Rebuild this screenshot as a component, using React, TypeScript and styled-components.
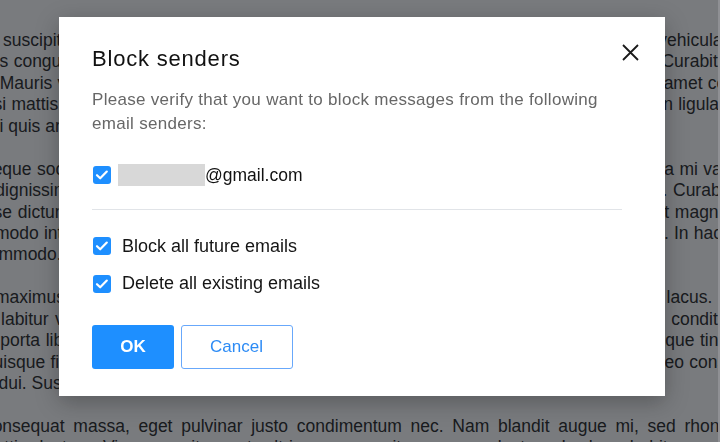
import React from "react";
import styled, { createGlobalStyle } from "styled-components";

const GlobalStyle = createGlobalStyle`
  html, body {
    margin: 0;
    padding: 0;
    overflow: hidden;
    background: #fff;
  }
  body {
    font-family: "Liberation Sans", Arial, sans-serif;
  }
`;

const LINE = 21.44;

const Page = styled.div`
  width: 720px;
  height: 442px;
  overflow: hidden;
  padding-top: 30px;
  box-sizing: border-box;
`;

const Article = styled.div`
  width: 790px;
  margin-left: -20px;
  color: #222;
  font-size: 17.5px;
  line-height: ${LINE}px;
`;

const Paragraph = styled.div`
  & + & {
    margin-top: ${LINE}px;
  }
`;

const Line = styled.div<{ $last?: boolean }>`
  height: ${LINE}px;
  overflow: hidden;
  text-align: justify;
  text-align-last: ${(p) => (p.$last ? "left" : "justify")};
`;

const Backdrop = styled.div`
  position: fixed;
  inset: 0;
  background: rgba(20, 22, 28, 0.57);
  padding: 17px 0 0 59px;
  box-sizing: border-box;
`;

const ScrollEdge = styled.div`
  position: fixed;
  top: 0;
  right: 0;
  width: 2px;
  height: 100%;
  background: #8f9094;
`;

const Dialog = styled.div`
  position: relative;
  width: 606px;
  box-sizing: border-box;
  background: #fff;
  padding: 28px 43px 27px 33px;
  box-shadow: 0 6px 22px rgba(0, 0, 0, 0.28);
  font-family: "Liberation Sans", Arial, sans-serif;
`;

const Title = styled.h2`
  margin: 0;
  font-size: 22px;
  line-height: 28px;
  font-weight: 400;
  letter-spacing: 0.8px;
  color: #111;
`;

const CloseButton = styled.button`
  position: absolute;
  top: 27px;
  right: 26px;
  width: 17px;
  height: 17px;
  padding: 0;
  border: none;
  background: none;
  cursor: pointer;
  display: flex;
`;

const Description = styled.p`
  margin: 15px 0 0;
  font-size: 17px;
  line-height: 24px;
  letter-spacing: 0.3px;
  color: #676767;
`;

const EmailRow = styled.div`
  margin-top: 28px;
  height: 22px;
  display: flex;
  align-items: center;
`;

const EmailMask = styled.span`
  width: 87px;
  height: 22px;
  margin-left: 7px;
  background: #d8d8d8;
`;

const EmailDomain = styled.span`
  font-size: 17.5px;
  color: #111;
`;

const Divider = styled.hr`
  margin: 23px 0 0;
  border: none;
  height: 1px;
  background: #e1e4e8;
`;

const Options = styled.div`
  margin-top: 24px;
  display: flex;
  flex-direction: column;
  gap: 13.5px;
`;

const OptionRow = styled.label`
  height: 24px;
  display: flex;
  align-items: center;
  gap: 11px;
  font-size: 18px;
  color: #151515;
`;

const Box = styled.span`
  width: 18px;
  height: 18px;
  margin-left: 1px;
  border-radius: 3px;
  background: #1e8fff;
  display: flex;
  flex-shrink: 0;
`;

const Actions = styled.div`
  margin-top: 29px;
  display: flex;
  gap: 6.5px;
`;

const Button = styled.button<{ $primary?: boolean }>`
  height: 44px;
  width: ${(p) => (p.$primary ? "82px" : "112px")};
  border-radius: 3px;
  font-family: inherit;
  font-size: 17px;
  cursor: pointer;
  box-sizing: border-box;
  border: ${(p) => (p.$primary ? "none" : "1.5px solid #68a8fb")};
  background: ${(p) => (p.$primary ? "#1e8fff" : "#fff")};
  color: ${(p) => (p.$primary ? "#fff" : "#2c8bf5")};
  font-weight: ${(p) => (p.$primary ? 700 : 400)};
`;

const CheckBox = () => (
  <Box>
    <svg width="18" height="18" viewBox="0 0 18 18">
      <path
        d="M4 9.2 L7.2 12.3 L13.8 5.6"
        fill="none"
        stroke="#fff"
        strokeWidth="2.2"
        strokeLinecap="round"
        strokeLinejoin="round"
      />
    </svg>
  </Box>
);

// page behind the modal, one entry per rendered line so the visible edges line up
const paragraphs: string[][] = [
  [
    "Ut suscipit nunc id ipsum tempor, nec fermentum risus aliquet. Donec quis tellus a est vehicula nulla.",
    "eus congue lacus, at pretium nibh ornare sit amet. Sed non erat quis elit, vitae magna. Curabitur nisl.",
    "ut Mauris vitae ligula quis massa facilisis tincidunt non eget orci. Nulla lorem semper sit amet congue.",
    "nisi mattis feugiat, sapien nulla porta velit, vel dictum urna mauris fringilla eros a lectus in ligula tellus.",
    "dui quis arcu at augue placerat pretium.",
  ],
  [
    "Neque sociis natoque penatibus et magnis dis parturient montes, nascetur mus. Donec a mi varius et",
    "a dignissim lorem, vitae tempus lacus molestie et. Vivamus vel pharetra sem a sit amet. Curabitur ut.",
    "ipse dictum neque, ac vehicula risus. Mauris ornare libero et ante ultrices convallis id sit magna. Sed",
    "a modo integer, sed tempus orci luctus quis. Aliquam erat volutpat. Nunc et mauris a vel. In hac nunc.",
    "commodo.",
  ],
  [
    "a maximus nibh in felis tincidunt, sit amet gravida erat pulvinar semper. Aenean ligula in lacus. Mauris",
    "et labitur vel eros non tellus fermentum porta. Praesent sapien faucibus, vitae nibh elit condit. Nunc",
    "et porta libero, ut sollicitudin nisi. Sed vitae dolor eget lectus mauris interdum aliquet neque tincidunt.",
    "Quisque finibus, mi sit amet ultrices suscipit, est erat semper nisi, quis a mauris rutrum leo consequat",
    "in dui. Suspendisse potenti.",
  ],
  [
    "Consequat massa, eget pulvinar justo condimentum nec. Nam blandit augue mi, sed rhoncus et",
    "mattis lectus. Vivamus sit amet ultrices sem, vitae cursus lectus. In hac habitasse platea.",
  ],
];

export default function App() {
  return (
    <>
      <GlobalStyle />
      <Page>
        <Article>
          {paragraphs.map((lines, i) => (
            <Paragraph key={i}>
              {lines.map((text, j) => (
                <Line key={j} $last={j === lines.length - 1 && i < paragraphs.length - 1}>
                  {text}
                </Line>
              ))}
            </Paragraph>
          ))}
        </Article>
      </Page>
      <Backdrop>
        <Dialog role="dialog">
          <Title>Block senders</Title>
          <CloseButton aria-label="Close">
            <svg width="17" height="17" viewBox="0 0 17 17">
              <path d="M1 1 L16 16 M16 1 L1 16" stroke="#1a1a1a" strokeWidth="1.8" />
            </svg>
          </CloseButton>
          <Description>
            Please verify that you want to block messages from the following email senders:
          </Description>
          <EmailRow>
            <CheckBox />
            <EmailMask />
            <EmailDomain>@gmail.com</EmailDomain>
          </EmailRow>
          <Divider />
          <Options>
            <OptionRow>
              <CheckBox />
              Block all future emails
            </OptionRow>
            <OptionRow>
              <CheckBox />
              Delete all existing emails
            </OptionRow>
          </Options>
          <Actions>
            <Button $primary>OK</Button>
            <Button>Cancel</Button>
          </Actions>
        </Dialog>
      </Backdrop>
      <ScrollEdge />
    </>
  );
}
